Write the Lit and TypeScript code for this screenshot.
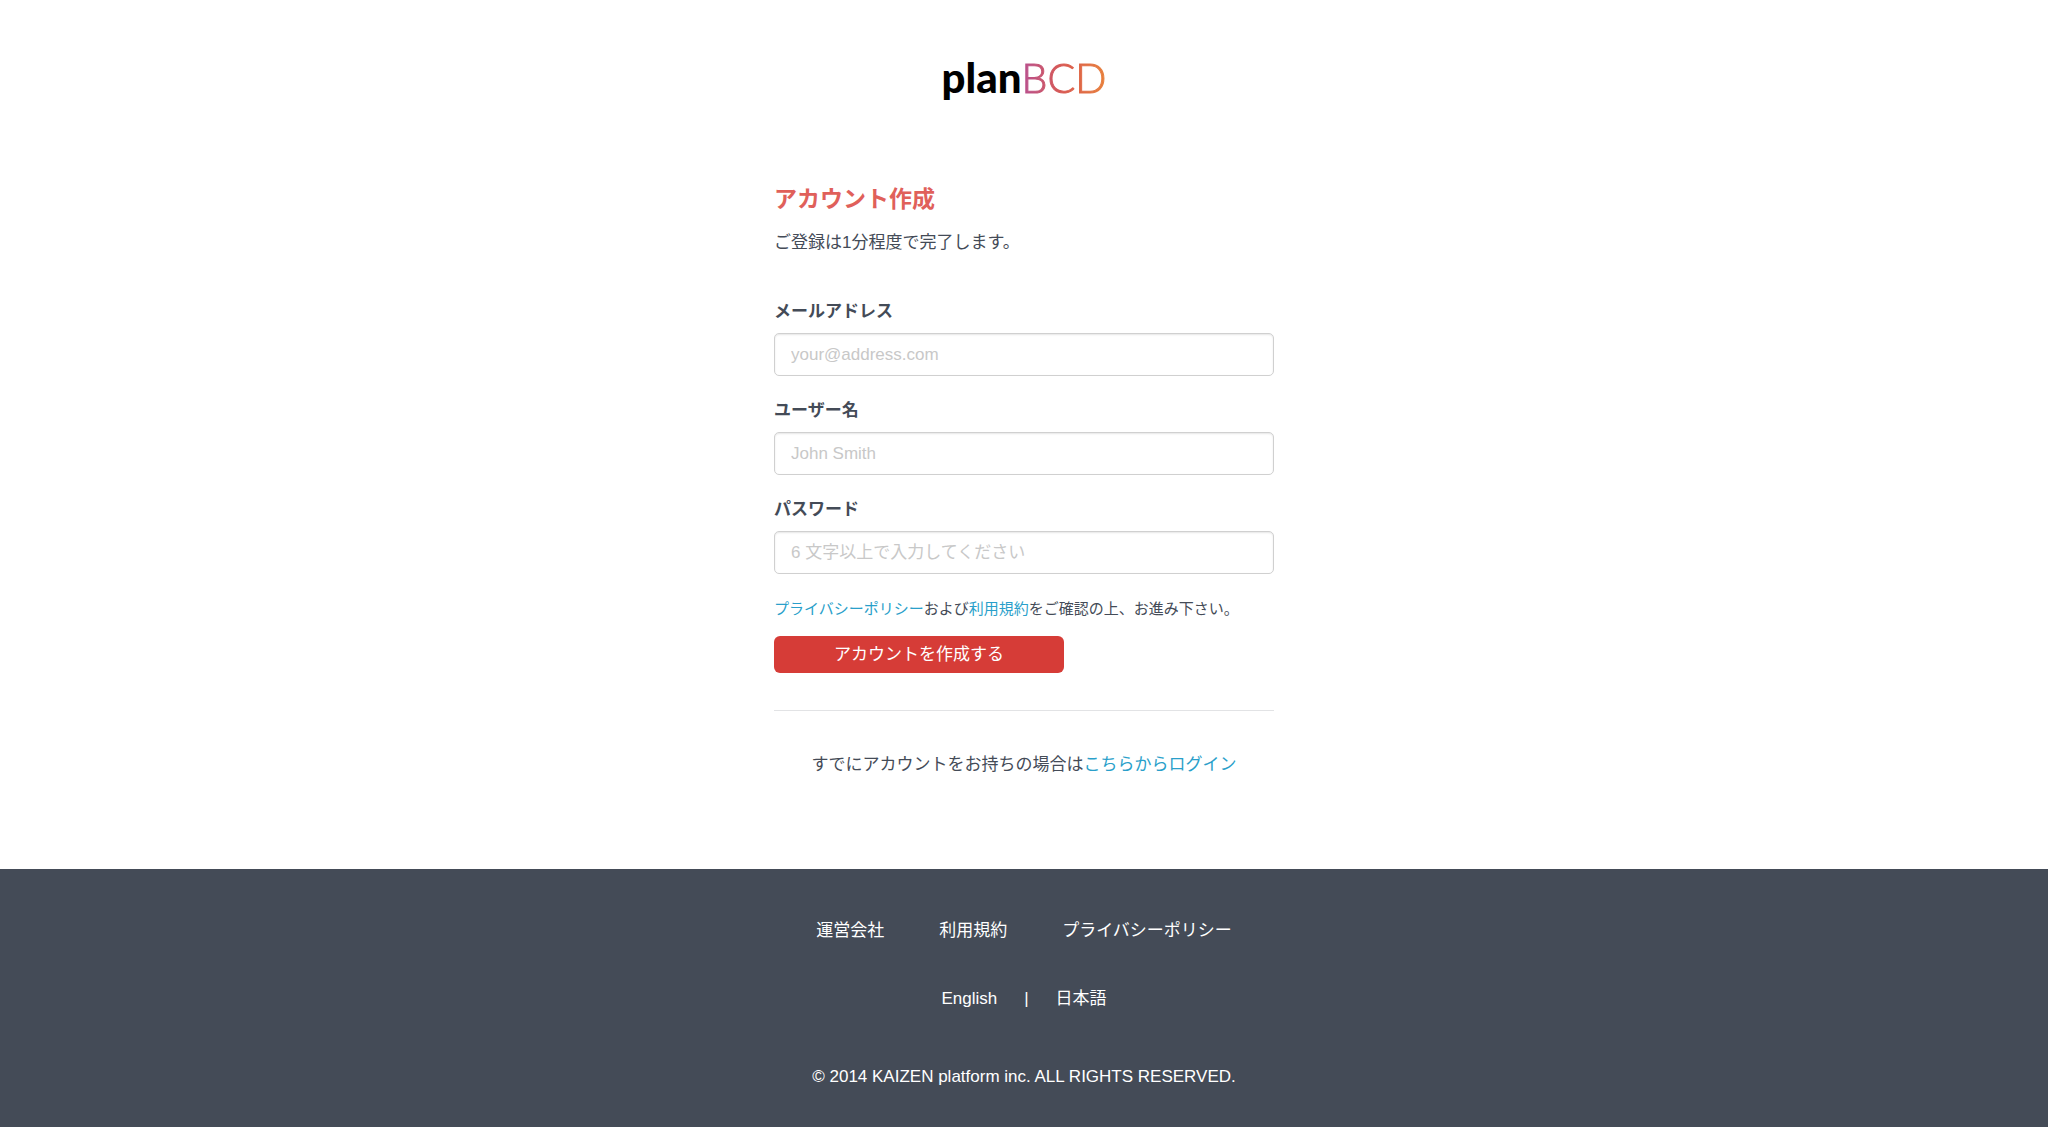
import { LitElement, html, css } from "lit";
import { customElement } from "lit/decorators.js";

interface Field {
  id: string;
  label: string;
  type: string;
  placeholder: string;
}

const FIELDS: Field[] = [
  { id: "email", label: "メールアドレス", type: "email", placeholder: "your@address.com" },
  { id: "username", label: "ユーザー名", type: "text", placeholder: "John Smith" },
  { id: "password", label: "パスワード", type: "password", placeholder: "6 文字以上で入力してください" },
];

@customElement("app-root")
export class AppRoot extends LitElement {
  static styles = css`
    :host {
      display: flex;
      flex-direction: column;
      min-height: 100vh;
      background: #fff;
      color: #444b57;
      font-family: "Liberation Sans", "Noto Sans CJK JP", sans-serif;
      font-size: 17px;
      line-height: 24px;
    }
    * {
      box-sizing: border-box;
    }
    a {
      color: #2a9fca;
      text-decoration: none;
    }
    .main {
      flex: 1;
      width: 100%;
      max-width: 500px;
      margin: 0 auto;
    }
    .logo {
      display: flex;
      justify-content: center;
      align-items: baseline;
      padding-top: 53px;
      font-family: Lato, sans-serif;
      font-size: 42px;
      line-height: 48px;
      color: #000;
    }
    .plan {
      font-weight: 900;
    }
    .bcd {
      font-size: 41px;
      font-weight: 300;
      background: linear-gradient(90deg, #b8508f, #d9594f 50%, #e8803a);
      background-clip: text;
      -webkit-background-clip: text;
      color: transparent;
      -webkit-text-stroke: 1px transparent;
    }
    .title {
      margin: 81px 0 0;
      font-size: 23px;
      line-height: 32px;
      color: #e0605a;
    }
    .lead {
      margin: 16px 0 45px;
    }
    .form {
      display: flex;
      flex-direction: column;
    }
    .field {
      display: flex;
      flex-direction: column;
      gap: 9px;
      margin-bottom: 23px;
    }
    .label {
      font-weight: bold;
    }
    .input {
      width: 100%;
      height: 43px;
      padding: 0 16px;
      border: 1px solid #d0d0d0;
      border-radius: 5px;
      box-shadow: inset 0 1px 2px rgba(0, 0, 0, 0.1);
      background: #fff;
      color: inherit;
      font: inherit;
    }
    .input::placeholder {
      color: #c8c8c8;
      opacity: 1;
    }
    .terms {
      margin: 0 0 15px;
      font-size: 15px;
    }
    .submit {
      align-self: flex-start;
      width: 290px;
      max-width: 100%;
      height: 37px;
      padding: 0;
      border: 0;
      border-radius: 6px;
      background: #d63c37;
      color: #fff;
      font: inherit;
      cursor: pointer;
    }
    .rule {
      height: 1px;
      margin: 37px 0 42px;
      border: 0;
      background: #e2e3e5;
    }
    .login {
      margin: 0 0 90px;
      text-align: center;
    }
    .footer {
      display: flex;
      flex-direction: column;
      align-items: center;
      padding: 50px 16px 38px;
      background: #444b57;
      color: #fff;
    }
    .footer a {
      color: inherit;
    }
    .links {
      display: flex;
      gap: 55px;
    }
    .languages {
      display: flex;
      gap: 27px;
      margin: 44px 0 54px;
    }
    .copyright {
      margin: 0;
    }
  `;

  render() {
    return html`
      <main class="main">
        <div class="logo"><span class="plan">plan</span><span class="bcd">BCD</span></div>
        <h1 class="title">アカウント作成</h1>
        <p class="lead">ご登録は1分程度で完了します。</p>
        <form class="form" @submit=${(e: Event) => e.preventDefault()}>
          ${FIELDS.map(
            (f) => html`
              <div class="field">
                <label class="label" for=${f.id}>${f.label}</label>
                <input class="input" id=${f.id} name=${f.id} type=${f.type} placeholder=${f.placeholder} />
              </div>
            `
          )}
          <p class="terms"><a href="#privacy">プライバシーポリシー</a>および<a href="#terms">利用規約</a>をご確認の上、お進み下さい。</p>
          <button class="submit" type="submit">アカウントを作成する</button>
        </form>
        <hr class="rule" />
        <p class="login">すでにアカウントをお持ちの場合は<a href="#login">こちらからログイン</a></p>
      </main>
      <footer class="footer">
        <nav class="links">
          <a href="#company">運営会社</a>
          <a href="#terms">利用規約</a>
          <a href="#privacy">プライバシーポリシー</a>
        </nav>
        <div class="languages">
          <a href="#en">English</a>
          <span>|</span>
          <a href="#ja">日本語</a>
        </div>
        <p class="copyright">© 2014 KAIZEN platform inc. ALL RIGHTS RESERVED.</p>
      </footer>
    `;
  }
}
